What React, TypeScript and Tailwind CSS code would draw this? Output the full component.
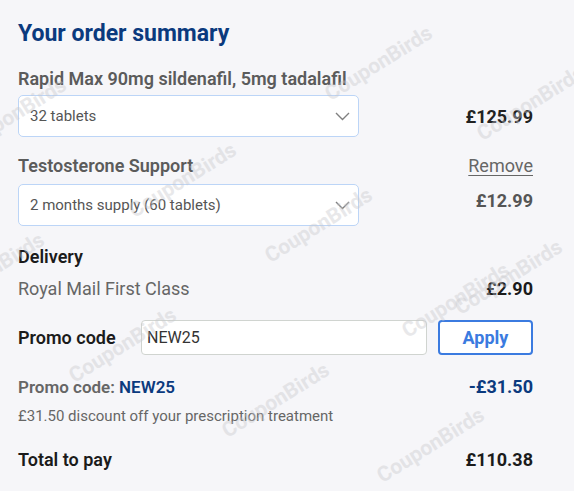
import React from 'react';

const marks = [
  { left: 318, top: 48 },
  { left: 470, top: 88 },
  { left: -48, top: 100 },
  { left: 122, top: 165 },
  { left: 258, top: 210 },
  { left: -70, top: 255 },
  { left: 448, top: 262 },
  { left: 62, top: 330 },
  { left: 215, top: 385 },
  { left: 370, top: 430 },
  { left: 395, top: 285 },
];

function Chevron() {
  return (
    <svg width="15" height="9" viewBox="0 0 15 9" fill="none" className="shrink-0">
      <path d="M1 1 L7.5 7.5 L14 1" stroke="#808080" strokeWidth="1.4" />
    </svg>
  );
}

function Select({ label }: { label: string }) {
  return (
    <div className="flex h-[42px] w-[341px] items-center justify-between rounded-[5px] border border-[#bcd5f7] bg-white pl-[11px] pr-[8px]">
      <span className="text-[15px] text-[#555]">{label}</span>
      <Chevron />
    </div>
  );
}

export default function App() {
  return (
    <div className="relative h-[491px] w-[574px] overflow-hidden bg-[#f6f6f9] font-['Roboto',sans-serif]">
      <div className="relative z-10 pl-[18px] pr-[41px] pt-[20px]">
        <h1 className="text-[23px] font-bold leading-[28px] text-[#0b3a7e]">Your order summary</h1>

        <p className="mt-[19px] text-[18px] font-semibold leading-[24px] text-[#5b5b5b]">Rapid Max 90mg sildenafil, 5mg tadalafil</p>
        <div className="mt-[4px] flex items-center justify-between">
          <Select label="32 tablets" />
          <span className="text-[18px] font-bold text-[#222]">£125.99</span>
        </div>

        <div className="mt-[17px] flex items-center justify-between leading-[24px]">
          <p className="text-[18px] font-semibold text-[#5b5b5b]">Testosterone Support</p>
          <span className="text-[18px] text-[#666] underline underline-offset-[3px]">Remove</span>
        </div>
        <div className="mt-[6px] flex items-center justify-between">
          <Select label="2 months supply (60 tablets)" />
          <span className="-mt-[10px] text-[18px] font-bold text-[#555]">£12.99</span>
        </div>

        <p className="mt-[19px] text-[18px] font-semibold leading-[24px] text-[#1b1b1b]">Delivery</p>
        <div className="mt-[8px] flex items-center justify-between leading-[24px]">
          <span className="text-[18px] text-[#666]">Royal Mail First Class</span>
          <span className="text-[18px] font-bold text-[#1b1b1b]">£2.90</span>
        </div>

        <div className="mt-[19px] flex h-[35px] items-center">
          <span className="w-[123px] text-[18px] font-semibold text-[#1b1b1b]">Promo code</span>
          <div className="flex h-[35px] w-[286px] items-center rounded-[4px] border border-[#d0d4d0] bg-white pl-[5px] text-[16px] text-[#333]">NEW25</div>
          <button className="ml-auto h-[35px] w-[95px] rounded-[4px] border-2 border-[#3b7be0] bg-white text-[18px] font-bold text-[#3b7be0]">Apply</button>
        </div>

        <div className="mt-[20px] flex items-center justify-between leading-[24px]">
          <span className="text-[17px] font-semibold text-[#666]">
            Promo code: <span className="text-[#0b3a7e]">NEW25</span>
          </span>
          <span className="text-[18px] font-bold text-[#0b3a7e]">-£31.50</span>
        </div>
        <p className="mt-[7px] text-[15px] leading-[20px] text-[#666]">£31.50 discount off your prescription treatment</p>

        <div className="mt-[22px] flex items-center justify-between leading-[24px]">
          <span className="text-[18px] font-semibold text-[#1b1b1b]">Total to pay</span>
          <span className="text-[18px] font-bold text-[#1b1b1b]">£110.38</span>
        </div>
      </div>

      {marks.map((m, i) => (
        <span
          key={i}
          className="pointer-events-none absolute z-20 -rotate-[32deg] select-none text-[21px] font-bold text-[#c8c8cc] opacity-40"
          style={{ left: m.left, top: m.top }}
        >
          CouponBirds
        </span>
      ))}
    </div>
  );
}
